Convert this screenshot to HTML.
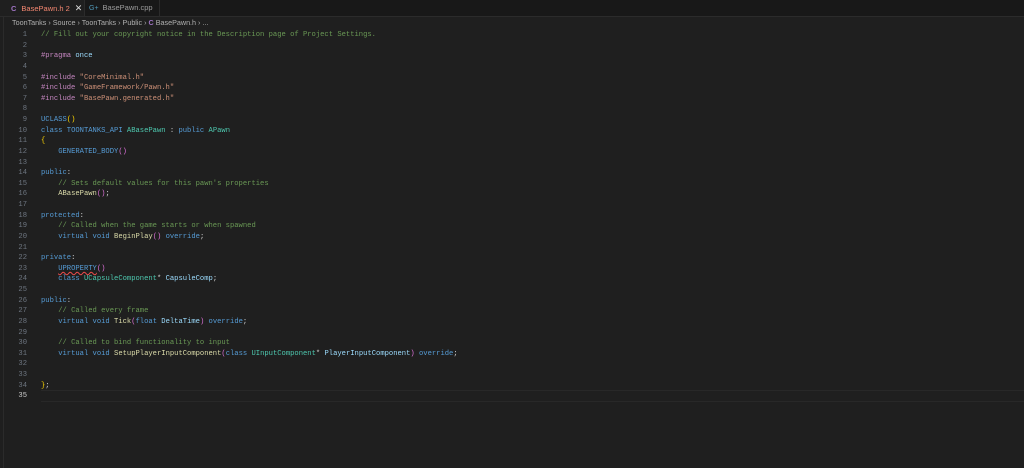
<!DOCTYPE html>
<html><head><meta charset="utf-8"><style>
body{margin:0;width:1024px;height:468px;background:#1f1f1f;overflow:hidden;font-family:"Liberation Sans",sans-serif;position:relative}
.tabs{position:absolute;left:0;top:0;width:1024px;height:16px;background:#181818;border-bottom:1px solid #2b2b2b}
.tab{position:absolute;top:0;height:16px;font-size:7.5px;line-height:16px;color:#9d9d9d}
.t1{left:0;width:84px;background:#1f1f1f;border-right:1px solid #2b2b2b;color:#f48771}
.t2{left:85px;width:74px;border-right:1px solid #2b2b2b}
.crumb{position:absolute;left:12px;top:17px;font-size:7.2px;line-height:12px;color:#b0b0b0}
.code{position:absolute;left:0;top:30px;font-family:"Liberation Mono",monospace;font-size:7.17px;line-height:10.62px;white-space:pre}
.ln{position:absolute;left:0;width:27px;text-align:right;color:#6e7681}
.tx{position:absolute;left:41px;color:#d4d4d4}
.c{color:#6a9955}.k{color:#569cd6}.p{color:#c586c0}.s{color:#ce9178}.t{color:#4ec9b0}.f{color:#dcdcaa}.v{color:#9cdcfe}.y{color:#ffd700}.m{color:#da70d6}
.cur{position:absolute;left:41px;top:390px;width:983px;height:10px;border-top:1px solid #282828;border-bottom:1px solid #282828}
.lb{position:absolute;left:3px;top:17px;width:1px;height:451px;background:#2b2b2b}
.sq{text-decoration:underline wavy #f14c4c;text-decoration-thickness:1px;text-underline-offset:1px}
</style></head><body>
<div class="tabs">
<div class="tab t1"><span style="color:#a074c4;font-weight:bold;margin-left:11px">C</span><span style="margin-left:5px">BasePawn.h 2</span><span style="color:#ddd;margin-left:5px;font-size:9px">✕</span></div>
<div class="tab t2"><span style="color:#519aba;margin-left:4px;font-size:7px">G+</span><span style="margin-left:4px">BasePawn.cpp</span></div>
</div>
<div class="crumb">ToonTanks › Source › ToonTanks › Public › <span style="color:#a074c4;font-weight:bold">C</span> BasePawn.h › ...</div>
<div class="lb"></div>
<div class="cur"></div>
<div class="code">
<div class="ln" style="top:0">1
2
3
4
5
6
7
8
9
10
11
12
13
14
15
16
17
18
19
20
21
22
23
24
25
26
27
28
29
30
31
32
33
34
<span style="color:#ccc">35</span></div>
<div class="tx" style="top:0"><span class="c">// Fill out your copyright notice in the Description page of Project Settings.</span>

<span class="p">#pragma</span> <span class="v">once</span>

<span class="p">#include</span> <span class="s">"CoreMinimal.h"</span>
<span class="p">#include</span> <span class="s">"GameFramework/Pawn.h"</span>
<span class="p">#include</span> <span class="s">"BasePawn.generated.h"</span>

<span class="k">UCLASS</span><span class="y">()</span>
<span class="k">class</span> <span class="k">TOONTANKS_API</span> <span class="t">ABasePawn</span> : <span class="k">public</span> <span class="t">APawn</span>
<span class="y">{</span>
    <span class="k">GENERATED_BODY</span><span class="m">()</span>

<span class="k">public</span>:
    <span class="c">// Sets default values for this pawn's properties</span>
    <span class="f">ABasePawn</span><span class="m">()</span>;

<span class="k">protected</span>:
    <span class="c">// Called when the game starts or when spawned</span>
    <span class="k">virtual</span> <span class="k">void</span> <span class="f">BeginPlay</span><span class="m">()</span> <span class="k">override</span>;

<span class="k">private</span>:
    <span class="k sq">UPROPERTY</span><span class="m">()</span>
    <span class="k">class</span> <span class="t">UCapsuleComponent</span>* <span class="v">CapsuleComp</span>;

<span class="k">public</span>:
    <span class="c">// Called every frame</span>
    <span class="k">virtual</span> <span class="k">void</span> <span class="f">Tick</span><span class="m">(</span><span class="k">float</span> <span class="v">DeltaTime</span><span class="m">)</span> <span class="k">override</span>;

    <span class="c">// Called to bind functionality to input</span>
    <span class="k">virtual</span> <span class="k">void</span> <span class="f">SetupPlayerInputComponent</span><span class="m">(</span><span class="k">class</span> <span class="t">UInputComponent</span>* <span class="v">PlayerInputComponent</span><span class="m">)</span> <span class="k">override</span>;


<span class="y">}</span>;
</div>
</div>
</body></html>
